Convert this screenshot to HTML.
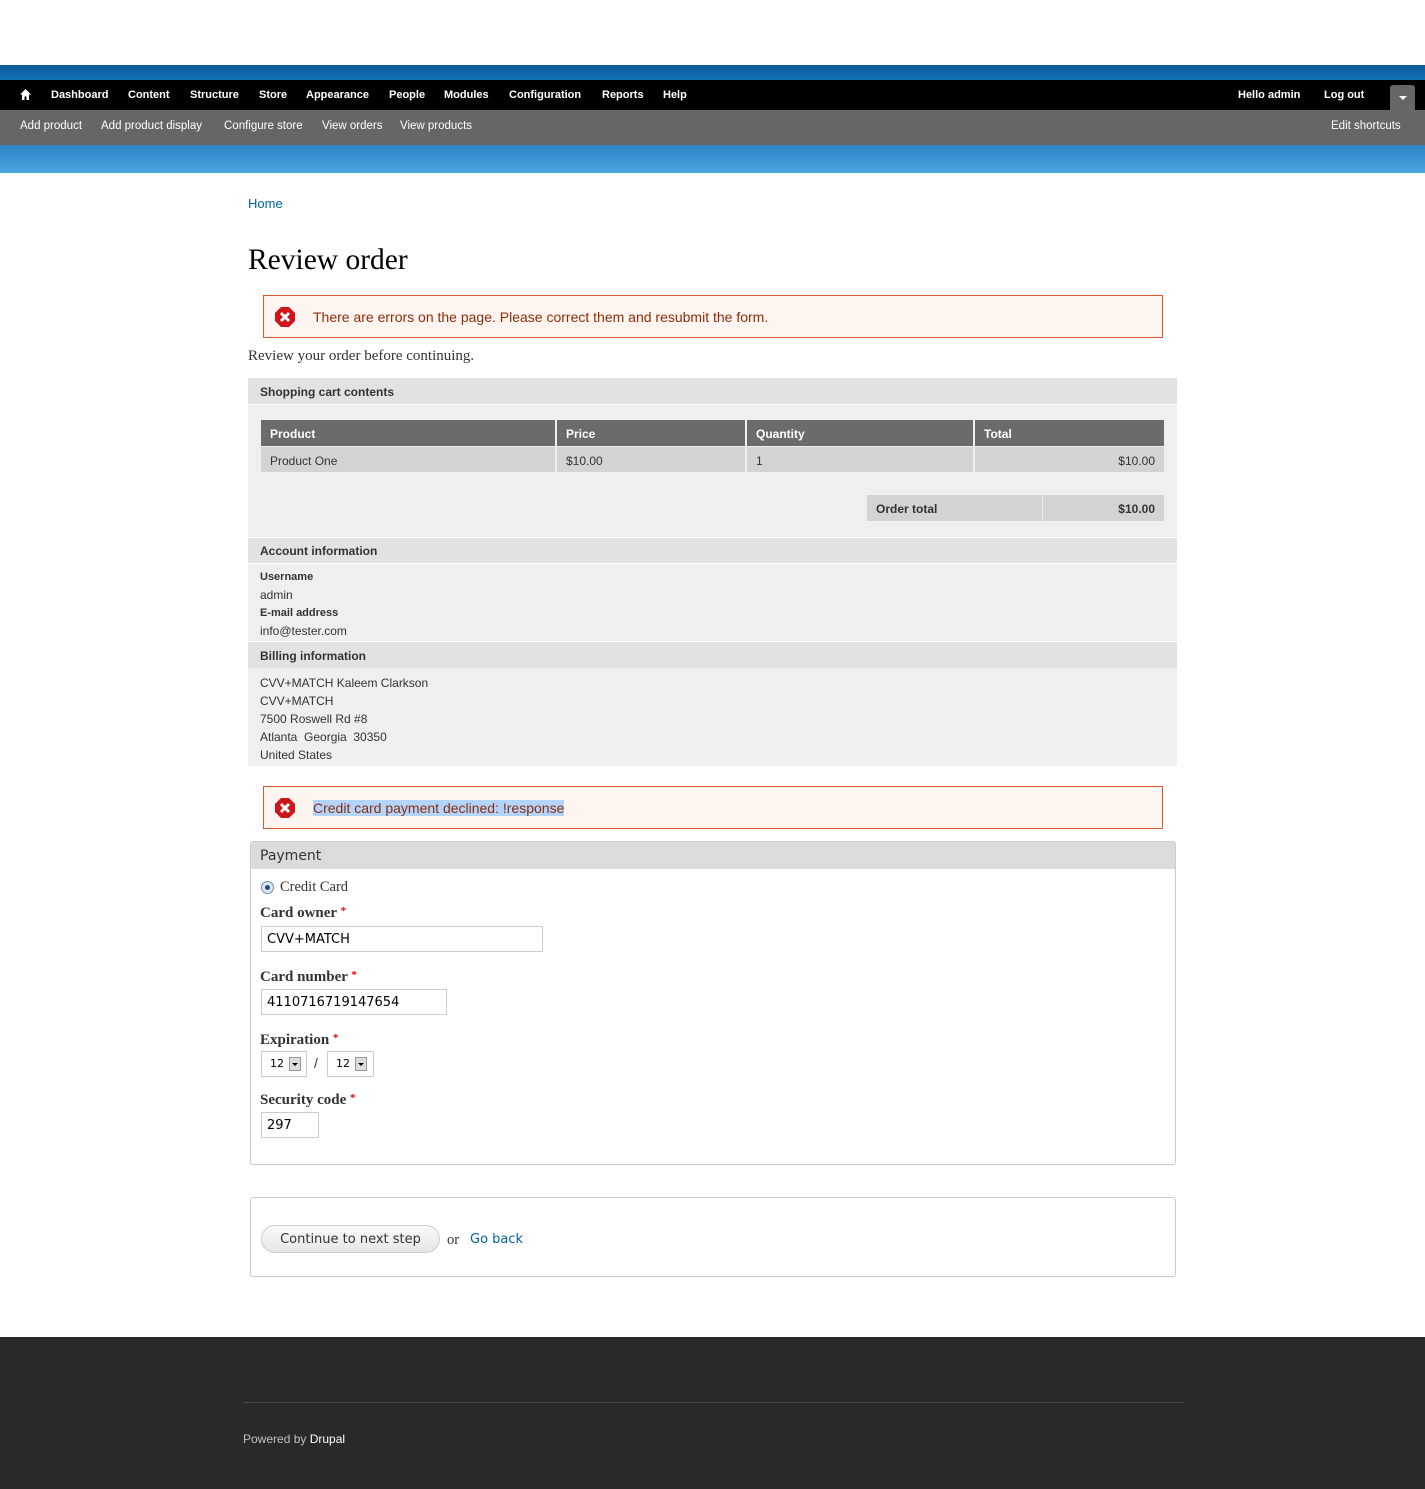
<!DOCTYPE html>
<html><head><meta charset="utf-8"><style>
*{margin:0;padding:0;box-sizing:border-box}
body{width:1425px;height:1489px;position:relative;background:#fff;font-family:"Liberation Sans",sans-serif;overflow:hidden}
.a{position:absolute}
.tb a,.sc a{position:absolute;color:#fff;font-size:11px;font-weight:bold;white-space:nowrap}
.sc a{font-weight:normal;color:#fff;font-size:11.5px}
.err{position:absolute;left:263px;width:900px;height:43px;border:1px solid #e0562c;background:#fef4f0;color:#8c2e0b;font-size:14px}
.err .t{position:absolute;left:49px;top:13px}
.sh{position:absolute;left:248px;width:929px;background:#e2e2e2;font-size:12px;font-weight:bold;color:#333;padding-left:12px}
.sb{position:absolute;left:248px;width:929px;background:#efefef;font-size:12px;color:#333}
.cell{position:absolute;font-size:12px;color:#333;padding:7px 9px 0}
.hd{background:#6b6b6b;color:#fff;font-weight:bold}
.dt{background:#d3d3d3}
.lbl{position:absolute;left:260px;font-family:"Liberation Serif",serif;font-weight:bold;font-size:15px;color:#333}
.lbl b{color:#e00;font-size:11px;vertical-align:top}
.inp{position:absolute;border:1px solid #ccc;background:#fff;font-family:"DejaVu Sans",sans-serif;font-size:13px;padding:5px 5px;color:#000}
.arr{position:absolute;left:27px;top:5px;width:12px;height:14px;background:#ddd;border:1px solid #999}
.arr:after{content:"";position:absolute;left:2px;top:5px;border:3px solid transparent;border-top:3px solid #000;border-bottom:0}
</style></head><body>
<div class="a" style="left:0;top:65px;width:1425px;height:15px;background:linear-gradient(#0a5a96,#1273b8)"></div>
<div class="a tb" style="left:0;top:80px;width:1425px;height:30px;background:#000">
<svg class="a" style="left:19px;top:8px" width="13" height="13" viewBox="0 0 13 13"><path d="M6.5 1L1 6.5h2V12h2.5V8.5h2V12H10V6.5h2z" fill="#fff"/></svg>
<a style="left:51px;top:9px">Dashboard</a><a style="left:128px;top:9px">Content</a><a style="left:190px;top:9px">Structure</a><a style="left:259px;top:9px">Store</a><a style="left:306px;top:9px">Appearance</a><a style="left:389px;top:9px">People</a><a style="left:444px;top:9px">Modules</a><a style="left:509px;top:9px">Configuration</a><a style="left:602px;top:9px">Reports</a><a style="left:663px;top:9px">Help</a>
<a style="left:1238px;top:9px">Hello admin</a><a style="left:1324px;top:9px">Log out</a>
<div class="a" style="left:1390px;top:5px;width:25px;height:25px;background:#666;border-radius:3px 3px 0 0"><div class="a" style="left:9px;top:11px;border:4px solid transparent;border-top:4px solid #fff;border-bottom:0"></div></div>
</div>
<div class="a sc" style="left:0;top:110px;width:1425px;height:35px;background:#666">
<a style="left:20px;top:10px">Add product</a><a style="left:101px;top:10px">Add product display</a><a style="left:224px;top:10px">Configure store</a><a style="left:322px;top:10px">View orders</a><a style="left:400px;top:10px">View products</a><a style="left:1331px;top:10px">Edit shortcuts</a>
</div>
<div class="a" style="left:0;top:145px;width:1425px;height:28px;background:linear-gradient(#2f84c4,#4aa4de)"></div>
<div class="a" style="left:248px;top:196px;font-size:13px;color:#0062a0">Home</div>
<div class="a" style="left:248px;top:244px;font-family:'Liberation Serif',serif;font-size:29.5px;color:#000">Review order</div>
<div class="err" style="top:295px"><svg class="a" style="left:10px;top:10px" width="22" height="22" viewBox="0 0 22 22"><polygon points="7,1 15,1 21,7 21,15 15,21 7,21 1,15 1,7" fill="#d0141a"/><path d="M7 7l8 8M15 7l-8 8" stroke="#fff" stroke-width="3"/></svg><span class="t">There are errors on the page. Please correct them and resubmit the form.</span></div>
<div class="a" style="left:248px;top:348px;font-family:'Liberation Serif',serif;font-size:15px;color:#333">Review your order before continuing.</div>
<div class="sh" style="top:378px;height:26px;padding-top:7px">Shopping cart contents</div>
<div class="sb" style="top:405px;height:132px"></div>
<div class="cell hd" style="left:261px;top:420px;width:294px;height:26px">Product</div>
<div class="cell hd" style="left:557px;top:420px;width:188px;height:26px">Price</div>
<div class="cell hd" style="left:747px;top:420px;width:226px;height:26px">Quantity</div>
<div class="cell hd" style="left:975px;top:420px;width:189px;height:26px">Total</div>
<div class="cell dt" style="left:261px;top:447px;width:294px;height:25px">Product One</div>
<div class="cell dt" style="left:557px;top:447px;width:188px;height:25px">$10.00</div>
<div class="cell dt" style="left:747px;top:447px;width:226px;height:25px">1</div>
<div class="cell dt" style="left:975px;top:447px;width:189px;height:25px;text-align:right">$10.00</div>
<div class="cell dt" style="left:867px;top:495px;width:175px;height:26px;font-weight:bold">Order total</div>
<div class="cell dt" style="left:1043px;top:495px;width:121px;height:26px;font-weight:bold;text-align:right">$10.00</div>
<div class="sh" style="top:538px;height:25px;padding-top:6px">Account information</div>
<div class="sb" style="top:564px;height:77px;padding:4px 12px;line-height:17.5px"><b style="font-size:11px">Username</b><br>admin<br><b style="font-size:11px">E-mail address</b><br>info@tester.com</div>
<div class="sh" style="top:642px;height:26px;padding-top:7px">Billing information</div>
<div class="sb" style="top:668px;height:98px;padding:6px 12px;line-height:18px">CVV+MATCH Kaleem Clarkson<br>CVV+MATCH<br>7500 Roswell Rd #8<br>Atlanta&nbsp; Georgia&nbsp; 30350<br>United States</div>
<div class="err" style="top:786px"><svg class="a" style="left:10px;top:10px" width="22" height="22" viewBox="0 0 22 22"><polygon points="7,1 15,1 21,7 21,15 15,21 7,21 1,15 1,7" fill="#d0141a"/><path d="M7 7l8 8M15 7l-8 8" stroke="#fff" stroke-width="3"/></svg><span class="t" style="background:#b3d4fc">Credit card payment declined: !response</span></div>
<div class="a" style="left:250px;top:841px;width:926px;height:324px;border:1px solid #ccc;border-radius:3px"></div>
<div class="a" style="left:251px;top:842px;width:924px;height:27px;background:#dbdbdb;font-size:14px;color:#333;padding:6px 9px;font-family:'DejaVu Sans',sans-serif">Payment</div>
<div class="a" style="left:261px;top:881px;width:13px;height:13px;border-radius:50%;border:1px solid #6a8bb0;background:#dde8f5"><div class="a" style="left:3px;top:3px;width:5px;height:5px;border-radius:50%;background:#1f4f86"></div></div>
<div class="a" style="left:280px;top:879px;font-family:'Liberation Serif',serif;font-size:14.5px;color:#333">Credit Card</div>
<div class="lbl" style="top:905px">Card owner <b>*</b></div>
<div class="inp" style="left:261px;top:926px;width:282px;height:26px">CVV+MATCH</div>
<div class="lbl" style="top:969px">Card number <b>*</b></div>
<div class="inp" style="left:261px;top:989px;width:186px;height:26px">4110716719147654</div>
<div class="lbl" style="top:1032px">Expiration <b>*</b></div>
<div class="inp" style="left:261px;top:1051px;width:46px;height:26px;font-size:11px;padding:5px 8px">12<span class="arr"></span></div>
<div class="a" style="left:314px;top:1055px;font-size:14px;color:#333">/</div>
<div class="inp" style="left:327px;top:1051px;width:47px;height:26px;font-size:11px;padding:5px 8px">12<span class="arr"></span></div>
<div class="lbl" style="top:1092px">Security code <b>*</b></div>
<div class="inp" style="left:261px;top:1112px;width:58px;height:26px">297</div>
<div class="a" style="left:250px;top:1197px;width:926px;height:80px;border:1px solid #ccc;border-radius:3px"></div>
<div class="a" style="left:261px;top:1225px;width:179px;height:28px;border:1px solid #ccc;border-radius:14px;background:linear-gradient(#fafafa,#e6e6e6);font-family:'DejaVu Sans',sans-serif;font-size:13px;color:#333;text-align:center;line-height:28px">Continue to next step</div>
<div class="a" style="left:447px;top:1232px;font-family:'Liberation Serif',serif;font-size:14.5px;color:#333">or</div>
<div class="a" style="left:470px;top:1232px;font-family:'DejaVu Sans',sans-serif;font-size:13px;color:#0062a0">Go back</div>
<div class="a" style="left:0;top:1337px;width:1425px;height:152px;background:#292929"></div>
<div class="a" style="left:243px;top:1402px;width:940px;height:1px;background:#4a4a4a"></div>
<div class="a" style="left:243px;top:1432px;font-size:12px;color:#c0c0c0">Powered by <span style="color:#fff">Drupal</span></div>
</body></html>
